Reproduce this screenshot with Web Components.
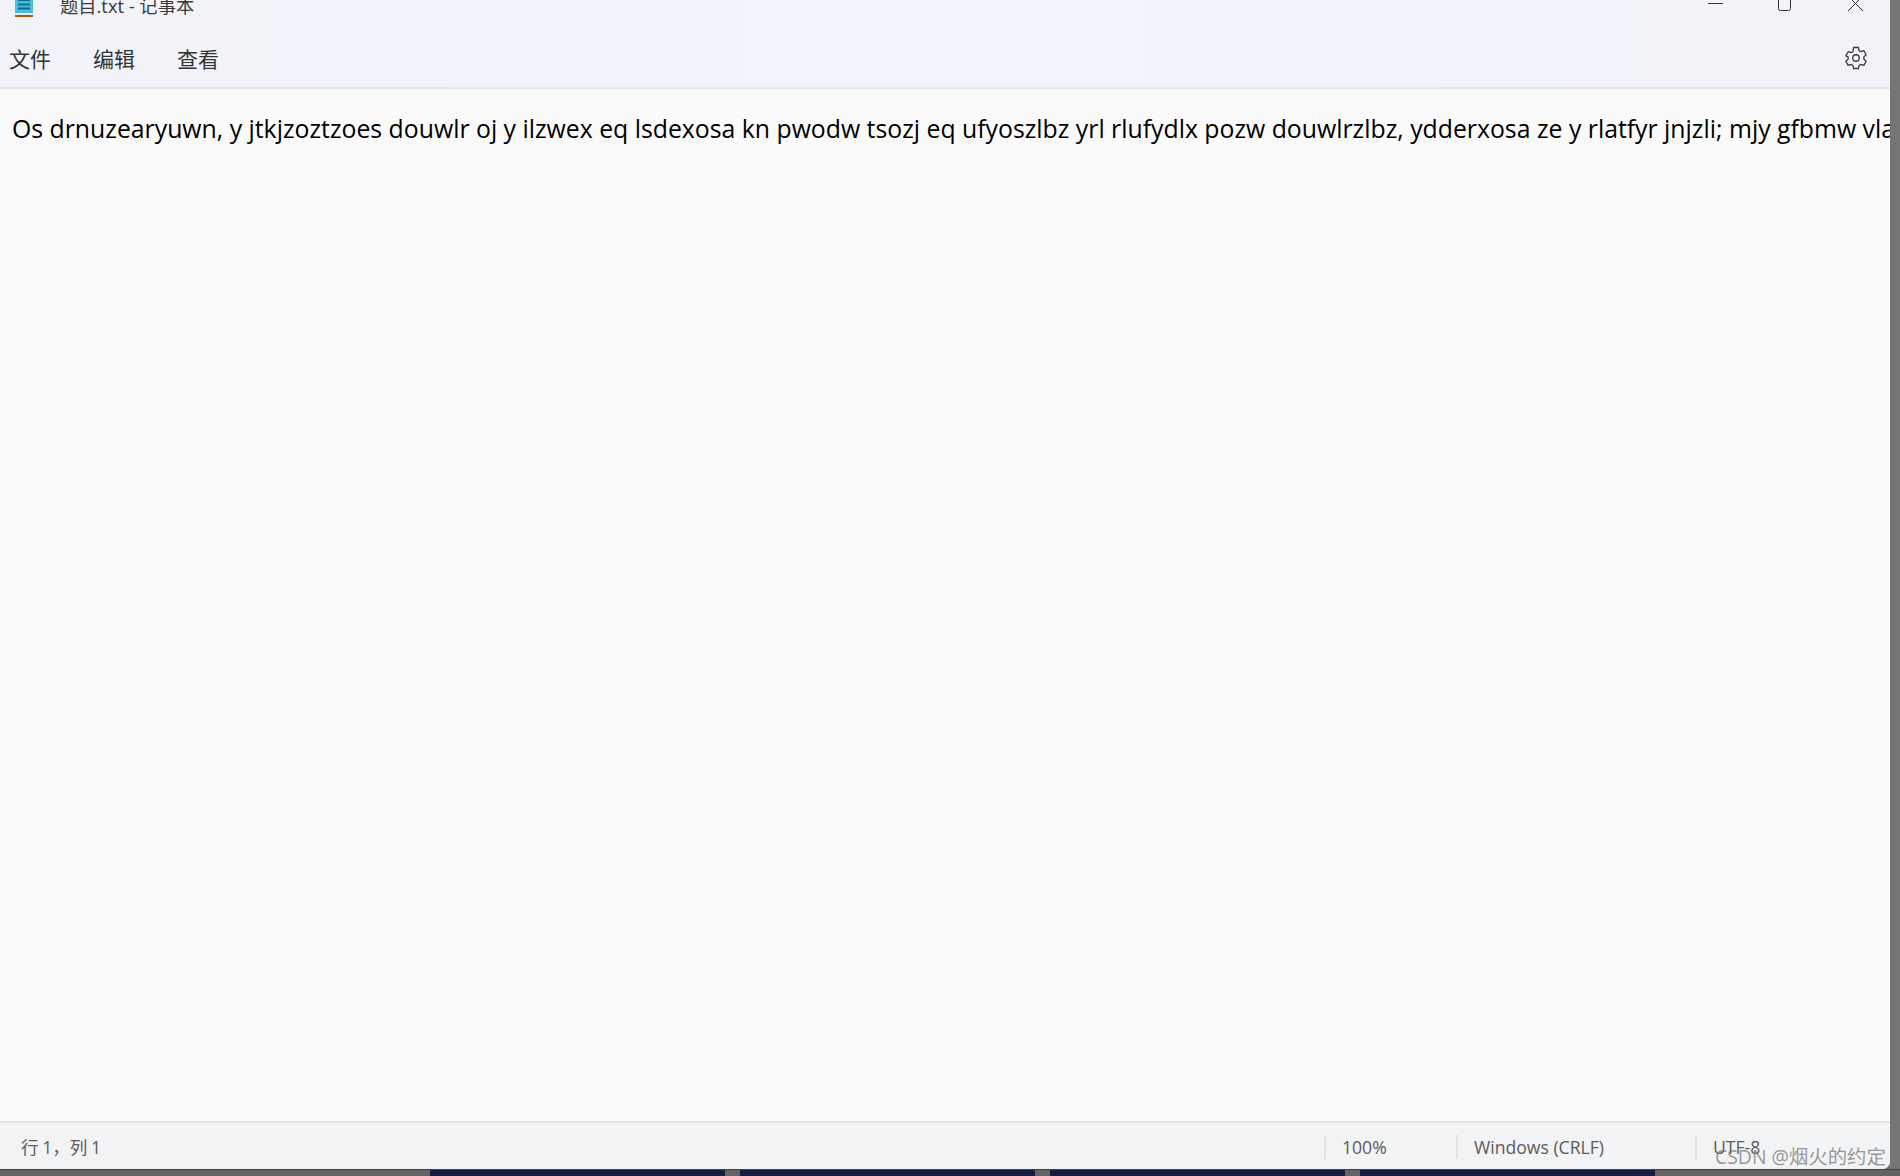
<!DOCTYPE html>
<html lang="zh">
<head>
<meta charset="utf-8">
<title>题目.txt - 记事本</title>
<style>
  html, body { margin: 0; height: 100%; overflow: hidden; background: #757575; }
  body { font-family: "Open Sans", "Noto Sans CJK SC", sans-serif; }
</style>
</head>
<body>
<np-desktop>
  <np-window>
    <np-titlebar slot="title">题目.txt - 记事本</np-titlebar>
    <np-menubar slot="menu">
      <span>文件</span><span>编辑</span><span>查看</span>
    </np-menubar>
    <np-editor slot="editor">Os drnuzearyuwn, y jtkjzoztzoes douwlr oj y ilzwex eq lsdexosa kn pwodw tsozj eq ufyoszlbz yrl rlufydlx pozw douwlrzlbz, ydderxosa ze y rlatfyr jnjzli; mjy gfbmw vlaoj</np-editor>
    <np-statusbar slot="status"></np-statusbar>
  </np-window>
</np-desktop>

<script>
// barra de tarefas escura por baixo da janela + faixa cinza à direita
class NpDesktop extends HTMLElement {
  constructor() {
    super();
    this.attachShadow({ mode: 'open' });
    this.shadowRoot.innerHTML = `
      <style>
        :host { display: flex; flex-direction: column; width: 1900px; height: 1176px; background: #6e6e6e; position: relative; overflow: hidden; }
        .main { display: flex; height: 1169px; background: #757575; }
        .gutter { width: 10px; }
        .strip { display: flex; height: 7px; background: #636363; border-top: 1px solid #3d4050; box-sizing: border-box; padding-left: 430px; gap: 15px; }
        .strip i { display: block; width: 295px; background: #161c44; }
        .mark { position: absolute; left: 1715px; top: 1145px; font: 19.4px/24px "Open Sans", "Noto Sans CJK SC", sans-serif; color: rgba(120,120,120,.75); white-space: nowrap; }
      </style>
      <div class="main"><slot></slot><div class="gutter"></div></div>
      <div class="strip"><i></i><i></i><i></i><i></i></div>
      <div class="mark">CSDN @烟火的约定</div>
    `;
  }
}

class NpWindow extends HTMLElement {
  constructor() {
    super();
    this.attachShadow({ mode: 'open' });
    this.shadowRoot.innerHTML = `
      <style>
        :host { display: flex; flex-direction: column; width: 1890px; height: 1169px; background: #fafafa; border-bottom-right-radius: 8px; overflow: hidden; }
        ::slotted([slot=editor]) { flex: 1; min-height: 0; }
      </style>
      <slot name="title"></slot>
      <slot name="menu"></slot>
      <slot name="editor"></slot>
      <slot name="status"></slot>
    `;
  }
}

class NpTitlebar extends HTMLElement {
  constructor() {
    super();
    this.attachShadow({ mode: 'open' });
    this.shadowRoot.innerHTML = `
      <style>
        :host { display: flex; height: 26px; background: linear-gradient(90deg, #f1f3f9 0, #f1f4fc 50%, #f1f3f9 100%); color: #3a3a3a; overflow: hidden; font: 18.3px/24px "Open Sans", "Noto Sans CJK SC", sans-serif; }
        .icon { margin-left: 15px; width: 19px; height: 17px; flex: none; }
        .text { margin: -6px 0 0 26px; white-space: nowrap; flex: 1; }
        .btns { display: flex; flex: none; margin-right: 27px; align-items: flex-start; }
        .btns svg + svg { margin-left: 54px; }
        .btns svg:last-child { margin-left: 56px; }
        svg { display: block; }
      </style>
      <svg class="icon" viewBox="0 0 19 17">
        <rect x="0" y="0" width="18" height="13" fill="#4dbbdd"/>
        <rect x="3" y="0" width="12" height="1" fill="#0b6d93"/>
        <rect x="3" y="3.500" width="12" height="2" fill="#0b6d93"/>
        <rect x="3" y="7.500" width="12" height="2" fill="#0b6d93"/>
        <rect x="0" y="13" width="18" height="2" fill="#e8eef2"/>
        <rect x="0" y="15" width="18" height="2" fill="#a8560f"/>
      </svg>
      <div class="text"><slot></slot></div>
      <div class="btns">
        <svg width="15" height="11" viewBox="0 0 15 11"><path d="M0 3.500H15" stroke="#333" fill="none"/></svg>
        <svg width="15" height="11" viewBox="0 0 15 11"><path d="M1.500 -4H11.500Q13.500 -4 13.500 -2V8.500Q13.500 10.500 11.500 10.500H3.500Q1.500 10.500 1.500 8.500Z" stroke="#333" fill="none"/></svg>
        <svg width="15" height="11" viewBox="0 0 15 11"><path d="M0 -4L15 11M15 -4L0 11" stroke="#333" fill="none"/></svg>
      </div>
    `;
  }
}

class NpMenubar extends HTMLElement {
  constructor() {
    super();
    this.attachShadow({ mode: 'open' });
    this.shadowRoot.innerHTML = `
      <style>
        :host { display: flex; align-items: center; box-sizing: border-box; height: 63px; background: linear-gradient(90deg, #f1f3f9 0, #f1f4fc 50%, #f1f3f9 100%); border-bottom: 2px solid #e4e5ea; color: #333; padding: 3px 0 0 9px; font: 21px/28px "Noto Sans CJK SC", sans-serif; }
        .items { display: flex; gap: 42px; flex: 1; }
        svg { display: block; margin-right: 21px; }
      </style>
      <div class="items"><slot></slot></div>
      <svg width="26" height="26" viewBox="0 0 24 24" fill="none" stroke="#3c3c3c" stroke-width="1.2" stroke-linejoin="round">
        <circle cx="12" cy="12" r="3"/>
        <path d="M9.800 2.300h4.400l.6 2.800 1.700 1 2.700-.9 2.200 3.800-2.100 1.900v2.200l2.100 1.900-2.200 3.800-2.700-.9-1.700 1-.6 2.800H9.800l-.6-2.800-1.700-1-2.700.9-2.200-3.800 2.100-1.900v-2.200L2.600 10 4.800 6.200l2.700.9 1.700-1z"/>
      </svg>
    `;
  }
}

class NpEditor extends HTMLElement {
  constructor() {
    super();
    this.attachShadow({ mode: 'open' });
    this.shadowRoot.innerHTML = `
      <style>
        :host { display: block; background: #fafafa; color: #000; overflow: hidden; white-space: nowrap; padding: 22px 0 0 12px; font: 24.8px/34px "Open Sans", "Noto Sans CJK SC", sans-serif; }
      </style>
      <slot></slot>
    `;
  }
}

class NpStatusbar extends HTMLElement {
  constructor() {
    super();
    this.attachShadow({ mode: 'open' });
    this.shadowRoot.innerHTML = `
      <style>
        :host { display: flex; align-items: center; box-sizing: border-box; height: 48px; background: #f2f3f5; border-top: 2px solid #e4e4e6; color: #5c5c5c; padding: 2px 0 0 21px; font: 17.6px/24px "Open Sans", "Noto Sans CJK SC", sans-serif; }
        .pos { flex: 1; word-spacing: -1px; }
        .cell { box-sizing: border-box; height: 24px; border-left: 2px solid #e2e2e4; padding-left: 16px; }
      </style>
      <div class="pos">行 1，列 1</div>
      <div class="cell" style="width:132px">100%</div>
      <div class="cell" style="width:239px">Windows (CRLF)</div>
      <div class="cell" style="width:195px">UTF-8</div>
    `;
  }
}

customElements.define('np-desktop', NpDesktop);
customElements.define('np-window', NpWindow);
customElements.define('np-titlebar', NpTitlebar);
customElements.define('np-menubar', NpMenubar);
customElements.define('np-editor', NpEditor);
customElements.define('np-statusbar', NpStatusbar);
</script>
</body>
</html>
